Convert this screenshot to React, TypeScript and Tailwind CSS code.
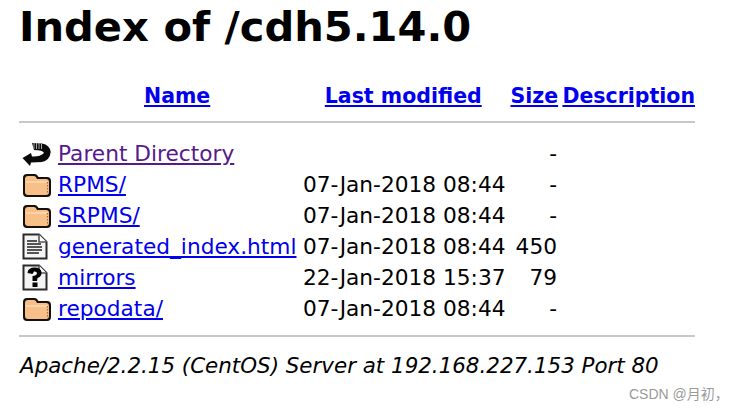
const FONT = "font-['DejaVu_Sans',Verdana,sans-serif]";

function FolderIcon() {
  return (
    <svg width="30" height="24" viewBox="0 0 30 24" className="block">
      <path d="M1 5 Q1 1 5 1 H13 Q15 1 16.5 4 H25 Q29 4 29 8 V20 Q29 24 25 24 H5 Q1 24 1 20 Z" fill="#15100a" />
      <path d="M3 6 Q3 3 6 3 H12 Q14 3 15 6 H24 Q27 6 27 9 V19 Q27 22 24 22 H6 Q3 22 3 19 Z" fill="#f8c088" />
      <path d="M4 9 H26" stroke="#fce3c4" strokeWidth="1.2" />
      <path d="M25.5 9 V21" stroke="#9c6c3a" strokeWidth="1.2" strokeDasharray="1.5 1.5" />
    </svg>
  );
}

function BackIcon() {
  return (
    <svg width="30" height="26" viewBox="0 0 30 26" className="block">
      <path d="M10 2 L20 2.5 Q28 4 28.7 11 Q28 19 20 21 L9 21.5 L8 25 L0.5 17 L9 12 L10 15.5 Q18 16 22 12 Q21 9 12 9 Z" fill="#0a0a0a" />
      <path d="M12 2 V8 M14.5 2 V8 M17 2 V8 M19.5 3 V8" stroke="#a8a8a8" strokeWidth="1" />
    </svg>
  );
}

function DocFrame({ children }: { children: React.ReactNode }) {
  return (
    <svg width="26" height="27" viewBox="0 0 26 27" className="block">
      <path d="M1.5 1.5 H17 L24.5 9 V25.5 H1.5 Z" fill="#f4f4f4" stroke="#2a2a2a" strokeWidth="2" />
      <path d="M17 1.5 V9 H24.5" fill="#ffffff" stroke="#555555" strokeWidth="1.6" />
      {children}
    </svg>
  );
}

function TextIcon() {
  return (
    <DocFrame>
      <path d="M5 8 H15 M5 11 H19 M5 14 H20 M5 17 H20 M5 20 H17" stroke="#555555" strokeWidth="2.2" />
    </DocFrame>
  );
}

function UnknownIcon() {
  return (
    <DocFrame>
      <path d="M5.5 9 Q6 3.5 12.5 3.5 Q19.5 3.5 19.5 9 Q19.5 12.5 15.5 14 L15 17 H10.5 V12 Q15 11.5 15 9 Q14.5 7 12 7.5 L10.5 10 Z" fill="#000000" />
      <rect x="10.5" y="18.5" width="5" height="4.5" fill="#000000" />
    </DocFrame>
  );
}

const rows = [
  { icon: <BackIcon />, name: "Parent Directory", date: "", size: "-", visited: true },
  { icon: <FolderIcon />, name: "RPMS/", date: "07-Jan-2018 08:44", size: "-" },
  { icon: <FolderIcon />, name: "SRPMS/", date: "07-Jan-2018 08:44", size: "-" },
  { icon: <TextIcon />, name: "generated_index.html", date: "07-Jan-2018 08:44", size: "450" },
  { icon: <UnknownIcon />, name: "mirrors", date: "22-Jan-2018 15:37", size: "79" },
  { icon: <FolderIcon />, name: "repodata/", date: "07-Jan-2018 08:44", size: "-" },
];

export default function App() {
  return (
    <div className={`relative h-[409px] w-[738px] overflow-hidden bg-white pl-[19px] pt-[2px] text-black ${FONT}`}>
      <h1 className="text-[41.6px] font-bold leading-[50px]">Index of /cdh5.14.0</h1>

      <div className="mt-[29px] w-[676px] text-[21.7px] leading-[31px]">
        <div className="flex h-[31px] text-[20.5px] font-bold text-[#0000ee]">
          <span className="w-[306px] pl-[125px]"><a className="underline">Name</a></span>
          <span className="w-[186px]"><a className="underline">Last modified</a></span>
          <span className="w-[52px]"><a className="underline">Size</a></span>
          <span><a className="underline">Description</a></span>
        </div>

        <hr className="mb-[15px] mt-[9px] border-t-2 border-[#c8c8c8]" />

        {rows.map((row) => (
          <div key={row.name} className="flex h-[31px] items-center">
            <span className="flex w-[39px] items-center pl-[3px]">{row.icon}</span>
            <a className={`w-[245px] whitespace-nowrap underline ${row.visited ? "text-[#551a8b]" : "text-[#0000ee]"}`}>{row.name}</a>
            <span className="w-[202px] whitespace-nowrap">{row.date}</span>
            <span className="w-[52px] text-right">{row.size}</span>
          </div>
        ))}

        <hr className="mt-[11px] border-t-2 border-[#c8c8c8]" />
      </div>

      <p className="ml-[1px] mt-[13px] whitespace-nowrap text-[21.4px] italic leading-[31px]">Apache/2.2.15 (CentOS) Server at 192.168.227.153 Port 80</p>

      <span className="absolute left-[629px] top-[386px] font-['Liberation_Sans','Noto_Sans_CJK_SC',sans-serif] text-[14px] leading-[16px] text-[#9a9a9a]">CSDN @月初，</span>
    </div>
  );
}
